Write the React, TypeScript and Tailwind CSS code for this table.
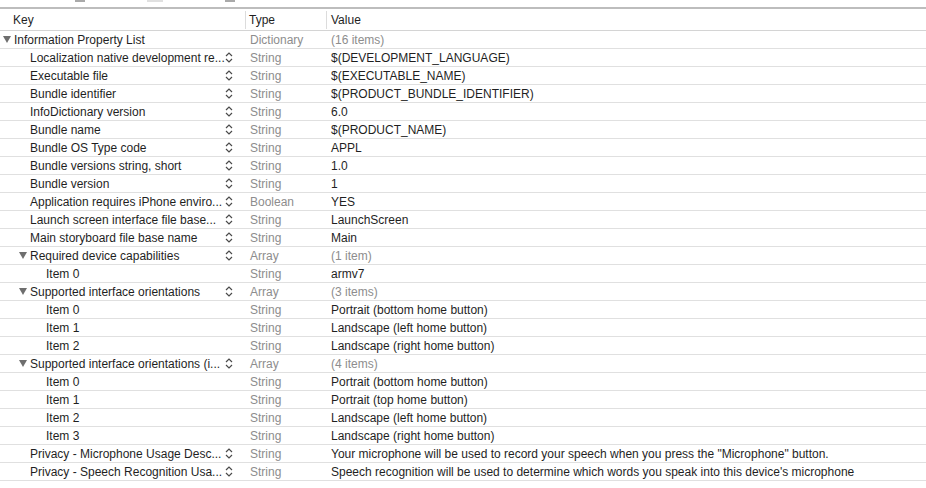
import React from "react";

type Row = {
    key: string;
    type: string;
    value: string;
    level: number;
    expandable?: boolean;
    stepper?: boolean;
    muted?: boolean;
};

const rows: Row[] = [
    { key: "Information Property List", type: "Dictionary", value: "(16 items)", level: 0, expandable: true, muted: true },
    { key: "Localization native development re...", type: "String", value: "$(DEVELOPMENT_LANGUAGE)", level: 1, stepper: true },
    { key: "Executable file", type: "String", value: "$(EXECUTABLE_NAME)", level: 1, stepper: true },
    { key: "Bundle identifier", type: "String", value: "$(PRODUCT_BUNDLE_IDENTIFIER)", level: 1, stepper: true },
    { key: "InfoDictionary version", type: "String", value: "6.0", level: 1, stepper: true },
    { key: "Bundle name", type: "String", value: "$(PRODUCT_NAME)", level: 1, stepper: true },
    { key: "Bundle OS Type code", type: "String", value: "APPL", level: 1, stepper: true },
    { key: "Bundle versions string, short", type: "String", value: "1.0", level: 1, stepper: true },
    { key: "Bundle version", type: "String", value: "1", level: 1, stepper: true },
    { key: "Application requires iPhone enviro...", type: "Boolean", value: "YES", level: 1, stepper: true },
    { key: "Launch screen interface file base...", type: "String", value: "LaunchScreen", level: 1, stepper: true },
    { key: "Main storyboard file base name", type: "String", value: "Main", level: 1, stepper: true },
    { key: "Required device capabilities", type: "Array", value: "(1 item)", level: 1, expandable: true, stepper: true, muted: true },
    { key: "Item 0", type: "String", value: "armv7", level: 2 },
    { key: "Supported interface orientations", type: "Array", value: "(3 items)", level: 1, expandable: true, stepper: true, muted: true },
    { key: "Item 0", type: "String", value: "Portrait (bottom home button)", level: 2 },
    { key: "Item 1", type: "String", value: "Landscape (left home button)", level: 2 },
    { key: "Item 2", type: "String", value: "Landscape (right home button)", level: 2 },
    { key: "Supported interface orientations (i...", type: "Array", value: "(4 items)", level: 1, expandable: true, stepper: true, muted: true },
    { key: "Item 0", type: "String", value: "Portrait (bottom home button)", level: 2 },
    { key: "Item 1", type: "String", value: "Portrait (top home button)", level: 2 },
    { key: "Item 2", type: "String", value: "Landscape (left home button)", level: 2 },
    { key: "Item 3", type: "String", value: "Landscape (right home button)", level: 2 },
    { key: "Privacy - Microphone Usage Desc...", type: "String", value: "Your microphone will be used to record your speech when you press the \"Microphone\" button.", level: 1, stepper: true },
    { key: "Privacy - Speech Recognition Usa...", type: "String", value: "Speech recognition will be used to determine which words you speak into this device's microphone", level: 1, stepper: true },
];

function Disclosure() {
    return (
        <svg width="8" height="7" viewBox="0 0 8 7" className="shrink-0">
            <path d="M0 0 L8 0 L4 7 Z" fill="#6e6e6e" />
        </svg>
    );
}

function Stepper() {
    return (
        <svg width="8" height="11" viewBox="0 0 8 11" fill="none" stroke="#4a4a4a" strokeWidth="1.2">
            <path d="M1 4 L4 1 L7 4" />
            <path d="M1 7 L4 10 L7 7" />
        </svg>
    );
}

export default function App() {
    return (
        <div className="w-[926px] h-[488px] bg-white overflow-hidden text-[12px] text-[#1f1f1f] font-['Liberation_Sans',Arial,sans-serif]">
            {/* cut-off toolbar */}
            <div className="h-[7px] flex items-start">
                <div className="ml-[75px] w-[10px] h-[2px] bg-[#a9a9a9]" />
                <div className="ml-[62px] w-[16px] h-[2px] bg-[#e0e0e0]" />
                <div className="ml-[62px] w-[10px] h-[2px] bg-[#a9a9a9]" />
            </div>
            <div className="h-[2px] bg-[#bdbdbd]" />

            {/* header */}
            <div className="h-[22px] flex items-center border-b border-[#d4d4d4]">
                <div className="w-[245px] pl-[13px]">Key</div>
                <div className="w-px h-[18px] bg-[#dcdcdc]" />
                <div className="w-[80px] pl-[3px]">Type</div>
                <div className="w-px h-[18px] bg-[#dcdcdc]" />
                <div className="pl-[4px]">Value</div>
            </div>

            {rows.map((r, i) => (
                <div key={i} className="h-[18px] flex items-center border-b border-[#e0e0e0]">
                    <div className="w-[245px] flex items-center">
                        <div
                            className={
                                r.level === 0
                                    ? "flex items-center pl-[3px] gap-[3px]"
                                    : r.level === 1
                                    ? r.expandable
                                        ? "flex items-center pl-[19px] gap-[3px]"
                                        : "flex items-center pl-[30px]"
                                    : "flex items-center pl-[46px]"
                            }
                        >
                            {r.expandable && <Disclosure />}
                            <span className="whitespace-nowrap">{r.key}</span>
                        </div>
                        {r.stepper && (
                            <div className="ml-auto mr-[12px] flex items-center">
                                <Stepper />
                            </div>
                        )}
                    </div>
                    <div className="w-[81px] pl-[5px] text-[#8d8d8d]">{r.type}</div>
                    <div className={`pl-[5px] whitespace-nowrap ${r.muted ? "text-[#8d8d8d]" : ""}`}>{r.value}</div>
                </div>
            ))}
        </div>
    );
}
